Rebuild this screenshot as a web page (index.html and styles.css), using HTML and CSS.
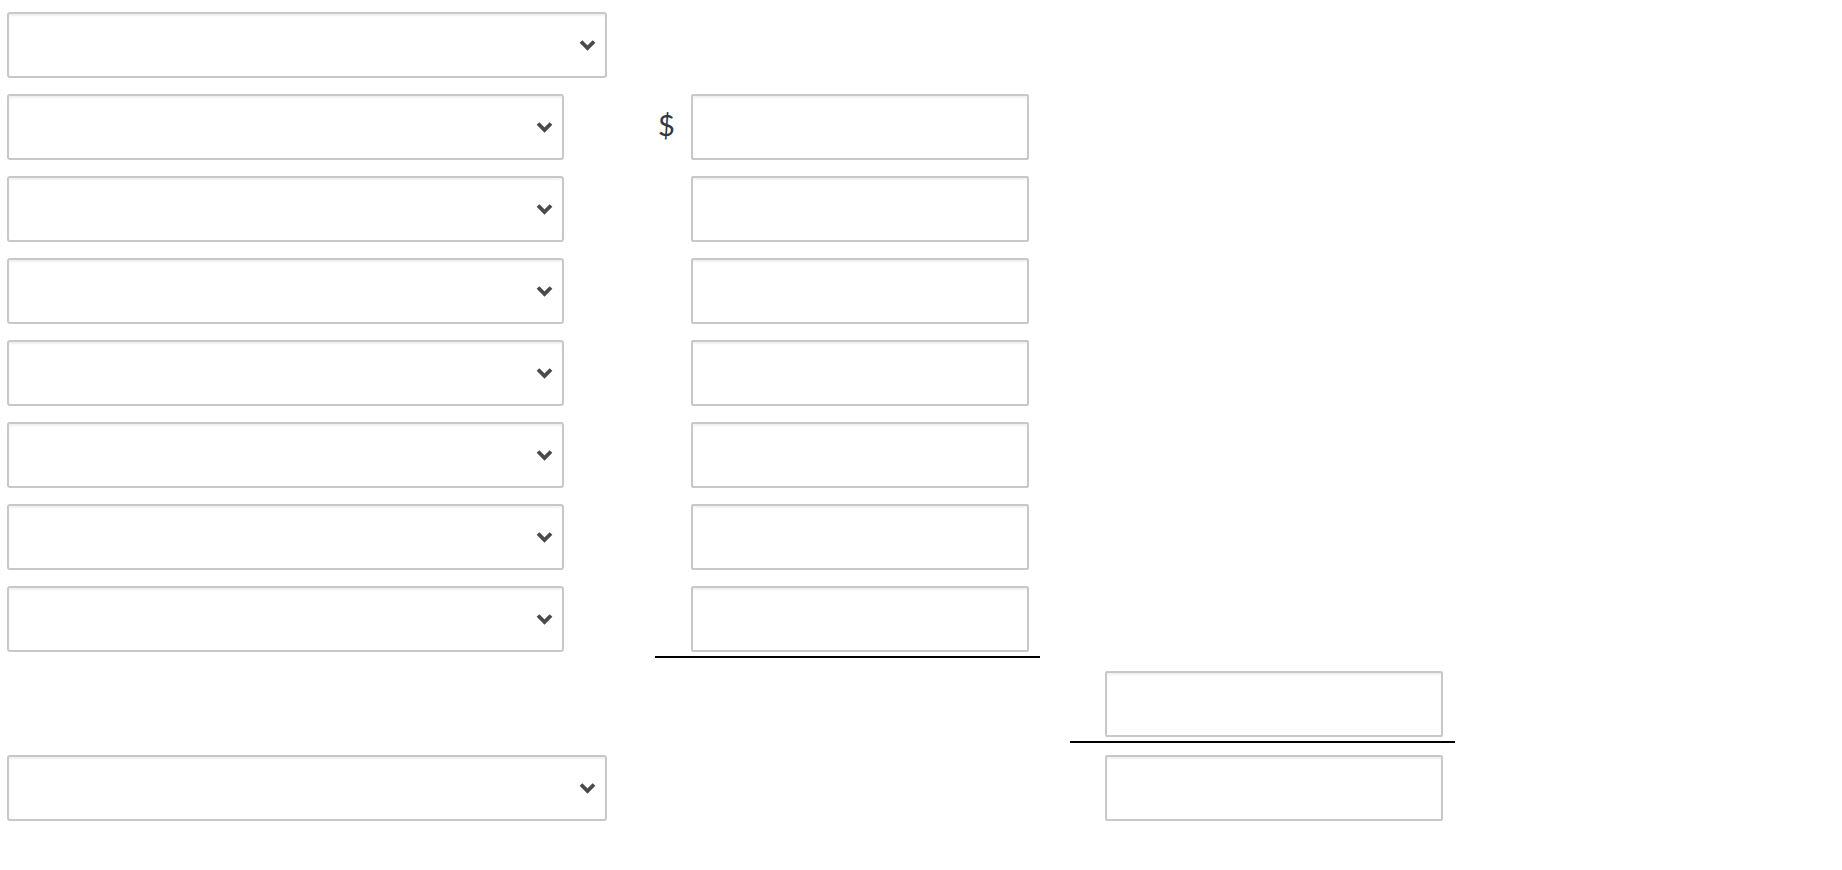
FILE: index.html
```html
<!DOCTYPE html>
<html lang="en">
<head>
  <meta charset="UTF-8" />
  <meta name="viewport" content="width=device-width, initial-scale=1.0"/>
  <title>Worksheet</title>
  <link rel="stylesheet" href="styles.css">
</head>
<body>

  <div class="sheet">
    <div class="row">
      <select class="pick wide"><option></option></select>
    </div>

    <div class="row">
      <select class="pick"><option></option></select>
      <div class="cell mid"><span class="cur">$</span><input class="amt" type="text"></div>
    </div>
    <div class="row">
      <select class="pick"><option></option></select>
      <div class="cell mid"><input class="amt" type="text"></div>
    </div>
    <div class="row">
      <select class="pick"><option></option></select>
      <div class="cell mid"><input class="amt" type="text"></div>
    </div>
    <div class="row">
      <select class="pick"><option></option></select>
      <div class="cell mid"><input class="amt" type="text"></div>
    </div>
    <div class="row">
      <select class="pick"><option></option></select>
      <div class="cell mid"><input class="amt" type="text"></div>
    </div>
    <div class="row">
      <select class="pick"><option></option></select>
      <div class="cell mid"><input class="amt" type="text"></div>
    </div>
    <div class="row last">
      <select class="pick"><option></option></select>
      <div class="cell mid ruled"><input class="amt" type="text"></div>
    </div>

    <div class="row sub">
      <div class="cell right ruled"><input class="amt" type="text"></div>
    </div>

    <div class="row total">
      <select class="pick wide"><option></option></select>
      <div class="cell right"><input class="amt" type="text"></div>
    </div>
  </div>

</body>
</html>
```

FILE: styles.css
```css
body {
  margin: 0;
  background: #fff;
  font-family: Lato, "Noto Sans", sans-serif;
  color: #333;
}

.sheet {
  padding: 12px 0 0 7px;
  display: flex;
  flex-direction: column;
  gap: 16px;
}

.row {
  display: grid;
  grid-template-columns: 600px 48px 385px 30px 385px;
  align-items: start;
}

.pick {
  grid-column: 1;
  appearance: none;
  -webkit-appearance: none;
  width: 557px;
  height: 66px;
  margin: 0;
  border: 2px solid #c8c8c8;
  border-radius: 3px;
  background: #fff url("data:image/svg+xml,%3Csvg xmlns='http://www.w3.org/2000/svg' width='17' height='12' viewBox='0 0 17 12'%3E%3Cpath d='M2 2.5 L8.5 9 L15 2.5' fill='none' stroke='%234a4a4a' stroke-width='3.8'/%3E%3C/svg%3E") no-repeat right 9px center;
  box-shadow: inset 0 2px 2px rgba(0, 0, 0, 0.06);
}

.pick.wide {
  width: 600px;
}

.cell {
  display: flex;
  align-items: center;
  padding: 0 11px 0 36px;
  position: relative;
}

.cell.mid {
  grid-column: 3;
}

.cell.right {
  grid-column: 5;
  padding-left: 35px;
  padding-right: 10px;
}

.ruled {
  padding-bottom: 4px;
  border-bottom: 2px solid #000;
}

.cur {
  position: absolute;
  left: 3px;
  top: 16px;
  font-size: 29px;
  line-height: 30px;
  color: #32373d;
}

.amt {
  width: 338px;
  height: 66px;
  margin: 0;
  border: 2px solid #c8c8c8;
  border-radius: 2px;
  background: #fff;
  box-shadow: inset 0 2px 2px rgba(0, 0, 0, 0.06);
}

.pick, .amt {
  box-sizing: border-box;
}

.row.sub {
  margin-top: -3px;
}

.row.total {
  margin-top: -4px;
}
```
